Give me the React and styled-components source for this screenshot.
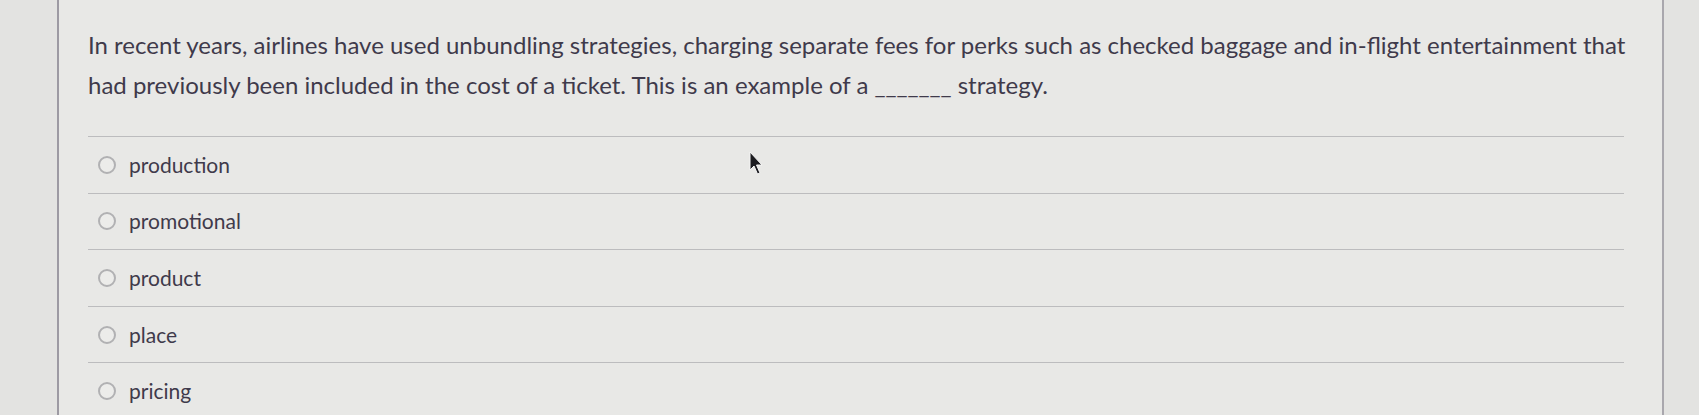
import React from "react";
import styled, { createGlobalStyle } from "styled-components";

const Global = createGlobalStyle`
  html, body { margin: 0; padding: 0; background: #e3e3e1; }
  body { font-family: Lato, "Open Sans", "Liberation Sans", sans-serif; }
  * { box-sizing: border-box; }
`;

const Page = styled.div`
  width: 1699px;
  height: 415px;
  overflow: hidden;
  background: #e3e3e1;
  padding-left: 57px;
  position: relative;
`;

const Panel = styled.div`
  width: 1607px;
  min-height: 440px;
  background: #e8e8e6;
  border-left: 2px solid #9d9aa3;
  border-right: 2px solid #a9a7ad;
  padding: 25px 38px 0 29px;
`;

const Question = styled.p`
  margin: 0 -24px 0 0;
  font-size: 24px;
  line-height: 40px;
  color: #3f3a4b;
`;

const Options = styled.div`
  margin-top: 31px;
  display: flex;
  flex-direction: column;
`;

const Option = styled.label`
  height: 56.6px;
  display: flex;
  align-items: center;
  gap: 13px;
  padding-left: 10px;
  border-top: 1.5px solid #bcbcbe;
  font-size: 21px;
  line-height: 24px;
  color: #3f3a4b;
`;

const Radio = styled.span`
  width: 18px;
  height: 18px;
  border-radius: 50%;
  border: 2px solid #b1b1b3;
  background: #ececea;
  flex: none;
`;

const Cursor = styled.svg`
  position: absolute;
  left: 749px;
  top: 151px;
`;

const options = ["production", "promotional", "product", "place", "pricing"];

export default function App() {
  return (
    <>
      <Global />
      <Page>
        <Panel>
          <Question>
            In recent years, airlines have used unbundling strategies, charging separate fees for perks such as checked baggage and in-flight entertainment that had previously been included in the cost of a ticket. This is an example of a _______ strategy.
          </Question>
          <Options>
            {options.map((o) => (
              <Option key={o}>
                <Radio />
                {o}
              </Option>
            ))}
          </Options>
        </Panel>
        <Cursor width="16" height="25" viewBox="0 0 16 25">
          <path d="M1 1 L1 19 L5 15 L8.5 23 L11 22 L7.5 14 L13 14 Z" fill="#1c1c20" stroke="#f4f4f4" strokeWidth="1" strokeLinejoin="round" />
        </Cursor>
      </Page>
    </>
  );
}
